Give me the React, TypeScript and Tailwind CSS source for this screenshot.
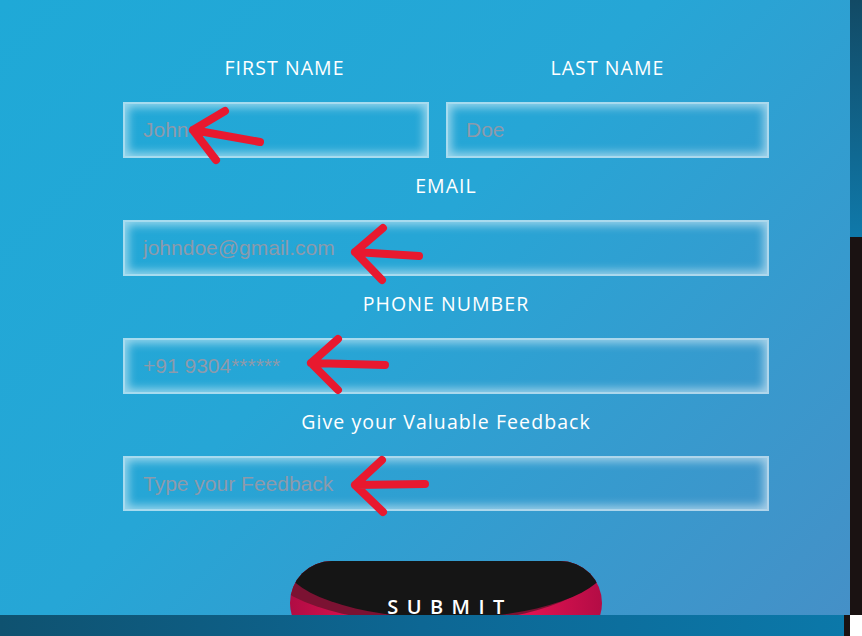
const labelCls =
  "block text-center text-[19.5px] leading-[22px] text-white font-['Open_Sans',sans-serif] tracking-[0.055em]";
const inputCls =
  "block h-[56px] w-full bg-transparent border-2 border-white/60 shadow-[inset_0_0_10px_3px_rgba(255,255,255,0.55)] px-[18px] text-[21px] text-[#8d9aab] placeholder:text-[#8d9aab] font-['Liberation_Sans',sans-serif] outline-none";

function Arrows() {
  const arrows = [
    "M225 111 L193 130 L216 160 M193 130 L260 142",
    "M383 228 L355 252 L382 280 M355 252 L419 256",
    "M338 339 L311 363 L338 390 M311 363 L385 365",
    "M382 460 L355 485 L383 512 M355 485 L425 484",
  ];
  return (
    <svg className="pointer-events-none absolute inset-0" width="850" height="615">
      {arrows.map((d) => (
        <path
          key={d}
          d={d}
          fill="none"
          stroke="#e8192f"
          strokeWidth={8}
          strokeLinecap="round"
          strokeLinejoin="round"
        />
      ))}
    </svg>
  );
}

function SubmitButton() {
  return (
    <button className="relative mx-auto mt-[50px] flex h-[84px] w-[312px] items-start justify-center overflow-hidden rounded-[42px] bg-[linear-gradient(90deg,#b00c44_0%,#de1250_22%,#e8175a_50%,#de1250_78%,#b30c45_100%)]">
      <span className="absolute left-[-22px] top-[-52px] h-[114px] w-[330px] rounded-[50%] bg-[#7b1232]" />
      <span className="absolute left-[-7px] top-[-57px] h-[114px] w-[326px] rounded-[50%] bg-[#151515]" />
      <span className="relative block pt-[32px] pl-[8px] text-[20px] leading-[28px] font-semibold tracking-[0.42em] text-white font-['Open_Sans',sans-serif]">
        SUBMIT
      </span>
    </button>
  );
}

export default function App() {
  return (
    <div className="flex h-[636px] w-[862px] flex-col overflow-hidden">
      <div className="flex h-[615px]">
        <main className="relative w-[850px] overflow-hidden bg-[linear-gradient(135deg,#1fa9d7_0%,#26a6d6_45%,#4590c7_100%)]">
          <form className="pl-[123px] pr-[81px] pt-[57px]">
            <div className="grid grid-cols-2">
              <div>
                <label className={labelCls}>FIRST NAME</label>
                <div className="mt-[23px] mr-[17px]">
                  <input className={inputCls} placeholder="John" />
                </div>
              </div>
              <div>
                <label className={labelCls}>LAST NAME</label>
                <div className="mt-[23px]">
                  <input className={inputCls} placeholder="Doe" />
                </div>
              </div>
            </div>
            <label className={`${labelCls} mt-[17px]`}>EMAIL</label>
            <input className={`${inputCls} mt-[23px]`} placeholder="johndoe@gmail.com" />
            <label className={`${labelCls} mt-[17px]`}>PHONE NUMBER</label>
            <input className={`${inputCls} mt-[23px]`} placeholder="+91 9304******" />
            <label className={`${labelCls} mt-[17px]`}>Give your Valuable Feedback</label>
            <input className={`${inputCls} mt-[23px] !h-[55px]`} placeholder="Type your Feedback" />
            <SubmitButton />
          </form>
          <Arrows />
        </main>
        <div className="flex w-[12px] flex-col">
          <div className="h-[237px] bg-[linear-gradient(180deg,#124a65_0%,#0f79aa_100%)]" />
          <div className="flex-1 bg-[#1a1212]" />
        </div>
      </div>
      <div className="flex flex-1">
        <div className="w-[844px] bg-[linear-gradient(90deg,#0f5270_0%,#0d6794_50%,#0b78a9_100%)]" />
        <div className="w-[6px] bg-[#1a1212]" />
        <div className="flex-1 bg-white" />
      </div>
    </div>
  );
}
